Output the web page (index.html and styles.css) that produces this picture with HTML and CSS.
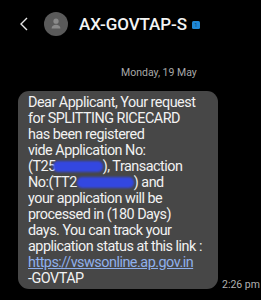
FILE: index.html
```html
<!DOCTYPE html>
<html>
<head>
<meta charset="utf-8">
<link rel="stylesheet" href="styles.css">
</head>
<body>
<div class="screen">
  <header class="topbar">
    <svg class="back" width="10" height="14" viewBox="0 0 10 14"><path d="M8 1 L2 7 L8 13" fill="none" stroke="#e6e6e6" stroke-width="1.4"/></svg>
    <div class="avatar">
      <svg width="24" height="24" viewBox="0 0 24 24"><circle cx="12" cy="12" r="12" fill="#5a5a5a"/><circle cx="12" cy="9.2" r="2.6" fill="#8a8a8a"/><path d="M7.6 16.6 c0-2.6 2-3.8 4.4-3.8 s4.4 1.2 4.4 3.8 z" fill="#8a8a8a"/></svg>
    </div>
    <h1 class="title">AX-GOVTAP-S</h1>
    <span class="badge">1</span>
  </header>
  <div class="date">Monday, 19 May</div>
  <div class="msgrow">
    <div class="bubble">Dear Applicant, Your request<br>for SPLITTING RICECARD<br>has been registered<br>vide Application No:<br>(T25<span class="blur b1"></span>), Transaction<br>No:(TT2<span class="blur b2"></span>) and<br>your application will be<br>processed in (180 Days)<br>days. You can track your<br>application status at this link :<br><a class="link">https://vswsonline.ap.gov.in</a><br>-GOVTAP</div>
    <div class="time">2:26 pm</div>
  </div>
</div>
</body>
</html>
```
FILE: styles.css
```css
html, body {
  margin: 0;
  padding: 0;
  background: #000;
}
.screen {
  width: 261px;
  height: 300px;
  overflow: hidden;
  font-family: Roboto, "Noto Sans", sans-serif;
  color: #f2f2f2;
}
.topbar {
  display: flex;
  align-items: center;
  height: 48px;
  padding-left: 19px;
}
.back {
  display: block;
  margin-right: 15px;
}
.avatar {
  width: 24px;
  height: 24px;
  margin-right: 11px;
}
.avatar svg { display: block; }
.title {
  margin: 0;
  font-size: 17px;
  font-weight: 500;
  letter-spacing: -0.1px;
  color: #f4f4f4;
}
.badge {
  display: inline-block;
  width: 8px;
  height: 8px;
  margin-left: 5px;
  margin-top: 2px;
  background: #1f88d6;
  border-radius: 1.5px;
  font-size: 5px;
  line-height: 8px;
  text-align: center;
  color: #0a3a66;
}
.date {
  margin-top: 19px;
  padding-left: 121px;
  font-size: 10.5px;
  color: #a8a8a8;
  line-height: 12px;
}
.msgrow {
  display: flex;
  align-items: flex-end;
  margin-top: 12px;
  padding-left: 18px;
}
.bubble {
  width: 179px;
  background: #474747;
  border-radius: 11px;
  padding: 4px 11px 2px 10px;
  font-size: 14.4px;
  letter-spacing: -0.5px;
  line-height: 16px;
  white-space: nowrap;
}
.blur {
  display: inline-block;
  height: 11px;
  background: #3347e0;
  border-radius: 5px;
  filter: blur(1px);
  vertical-align: -1px;
}
.b1 { width: 50px; margin-left: -3px; }
.b2 { width: 57px; }
.link {
  color: #8fb0ec;
  text-decoration: underline;
}
.time {
  margin-left: 4px;
  margin-bottom: -2px;
  font-size: 10.5px;
  color: #b0b0b0;
  line-height: 12px;
}
```
